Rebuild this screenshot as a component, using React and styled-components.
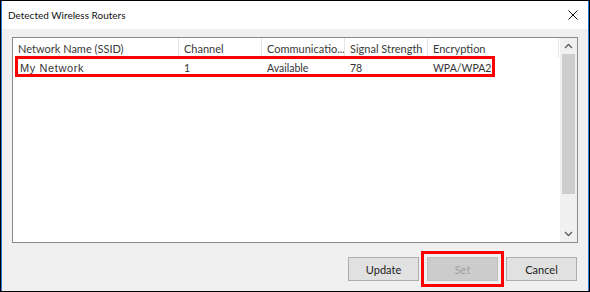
import React from 'react';
import styled, { createGlobalStyle } from 'styled-components';

const GlobalStyle = createGlobalStyle`
  html, body {
    margin: 0;
    padding: 0;
    background: #ffffff;
  }
  * {
    box-sizing: border-box;
  }
`;

const columns = [
  { key: 'name', title: 'Network Name (SSID)', width: 166 },
  { key: 'channel', title: 'Channel', width: 83 },
  { key: 'comm', title: 'Communicatio...', width: 83 },
  { key: 'signal', title: 'Signal Strength', width: 83 },
  { key: 'enc', title: 'Encryption', width: 131 },
];

const rows = [
  { name: 'My Network', channel: '1', comm: 'Available', signal: '78', enc: 'WPA/WPA2' },
];

export default function App() {
  return (
    <>
      <GlobalStyle />
      <Window>
        <Frame>
          <TitleBar>
            <Title>Detected Wireless Routers</Title>
            <CloseButton>
              <svg width="10" height="10" viewBox="0 0 10 10">
                <path d="M0.5 0.5 L9.5 9.5 M9.5 0.5 L0.5 9.5" stroke="#111" strokeWidth="1" fill="none" />
              </svg>
            </CloseButton>
          </TitleBar>
          <Body>
            <ListView>
              <ListContent>
                <Header>
                  {columns.map((c) => (
                    <HeaderCell key={c.key} $width={c.width}>
                      {c.title}
                    </HeaderCell>
                  ))}
                  <HeaderFill />
                </Header>
                {rows.map((r) => (
                  <Row key={r.name}>
                    {columns.map((c) => (
                      <Cell key={c.key} $width={c.width} $first={c.key === 'name'}>
                        {r[c.key]}
                      </Cell>
                    ))}
                    <Highlight />
                  </Row>
                ))}
              </ListContent>
              <ScrollBar>
                <ArrowBox>
                  <svg width="9" height="6" viewBox="0 0 9 6">
                    <path d="M1 5 L4.5 1.5 L8 5" stroke="#606060" strokeWidth="1.4" fill="none" />
                  </svg>
                </ArrowBox>
                <Track>
                  <Thumb />
                </Track>
                <ArrowBox>
                  <svg width="9" height="6" viewBox="0 0 9 6">
                    <path d="M1 1 L4.5 4.5 L8 1" stroke="#606060" strokeWidth="1.4" fill="none" />
                  </svg>
                </ArrowBox>
              </ScrollBar>
            </ListView>
            <ButtonRow>
              <Button>Update</Button>
              <Marked>
                <Button disabled>Set</Button>
                <MarkBox />
              </Marked>
              <Button>Cancel</Button>
            </ButtonRow>
          </Body>
        </Frame>
      </Window>
    </>
  );
}

const Window = styled.div`
  width: 590px;
  height: 292px;
  border: 1px solid #000;
  background: #fff;
`;

const Frame = styled.div`
  display: flex;
  flex-direction: column;
  height: 100%;
  border-left: 1px solid #2f7ad6;
  border-right: 1px solid #2f7ad6;
  font-family: Lato, 'Noto Sans', sans-serif;
  font-weight: 400;
`;

const TitleBar = styled.div`
  display: flex;
  align-items: center;
  justify-content: space-between;
  height: 28px;
  padding: 0 8px 1px 6px;
  background: #fff;
  flex-shrink: 0;
`;

const Title = styled.span`
  font-size: 10px;
  color: #111;
`;

const CloseButton = styled.div`
  display: flex;
  align-items: center;
  justify-content: center;
  width: 12px;
  height: 12px;
  margin-right: 1px;
`;

const Body = styled.div`
  flex: 1;
  display: flex;
  flex-direction: column;
  background: #f0f0f0;
  padding: 8px 10px 9px 10px;
`;

const ListView = styled.div`
  display: flex;
  height: 206px;
  border: 1px solid #8a8a8a;
  background: #fff;
`;

const ListContent = styled.div`
  flex: 1;
  display: flex;
  flex-direction: column;
`;

const Header = styled.div`
  display: flex;
  height: 20px;
`;

const HeaderCell = styled.div`
  width: ${(p) => p.$width}px;
  flex-shrink: 0;
  padding: 4px 0 0 5px;
  font-size: 11px;
  color: #3a3a3a;
  border-right: 1px solid #e5e5e5;
  white-space: nowrap;
  overflow: hidden;
`;

const HeaderFill = styled.div`
  flex: 1;
`;

const Row = styled.div`
  position: relative;
  display: flex;
  height: 19px;
  align-items: center;
`;

const Cell = styled.div`
  width: ${(p) => p.$width}px;
  flex-shrink: 0;
  padding-left: ${(p) => (p.$first ? 7 : 5)}px;
  font-family: ${(p) => (p.$first ? "'Liberation Sans', Arial, sans-serif" : "Lato, sans-serif")};
  letter-spacing: ${(p) => (p.$first ? '0.6px' : '0')};
  font-size: ${(p) => (p.$first ? 11 : 10.5)}px;
  font-weight: 400;
  color: #333;
  white-space: nowrap;
`;

const Highlight = styled.div`
  position: absolute;
  left: 2px;
  top: -2px;
  width: 480px;
  height: 21px;
  border: 3px solid #ff0000;
  pointer-events: none;
`;

const ScrollBar = styled.div`
  width: 17px;
  display: flex;
  flex-direction: column;
  background: #f0f0f0;
`;

const ArrowBox = styled.div`
  height: 16px;
  display: flex;
  align-items: center;
  justify-content: center;
  flex-shrink: 0;
`;

const Track = styled.div`
  flex: 1;
  padding: 0 2px;
`;

const Thumb = styled.div`
  height: 140px;
  background: #cdcdcd;
`;

const ButtonRow = styled.div`
  display: flex;
  justify-content: flex-end;
  gap: 8px;
  margin-top: 14px;
  padding-right: 1px;
`;

const Marked = styled.div`
  position: relative;
  display: flex;
`;

const MarkBox = styled.div`
  position: absolute;
  left: -6px;
  top: -6px;
  right: -6px;
  bottom: -6px;
  border: 3px solid #ff0000;
  pointer-events: none;
`;

const Button = styled.button`
  width: 71px;
  height: 24px;
  padding: 0;
  font-family: Lato, 'Noto Sans', sans-serif;
  font-size: 11px;
  color: #222;
  background: #e1e1e1;
  border: 1px solid #adadad;
  border-radius: 0;

  &:disabled {
    background: #cccccc;
    border-color: #bfbfbf;
    color: #a0a0a0;
  }
`;
